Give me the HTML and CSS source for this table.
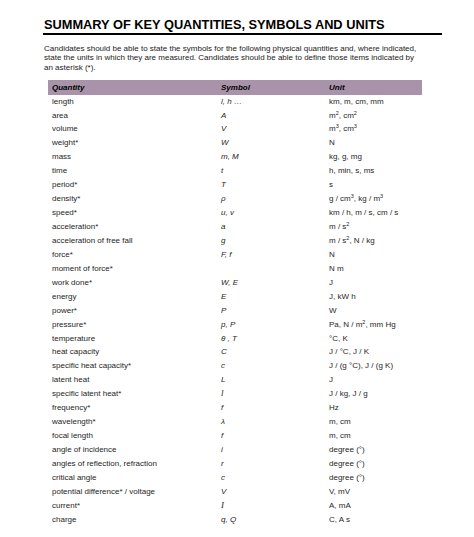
FILE: index.html
```html
<!DOCTYPE html>
<html lang="en">
<head>
<meta charset="utf-8">
<title>Summary of key quantities, symbols and units</title>
<link rel="stylesheet" href="styles.css">
</head>
<body>
<main class="page">
  <h1 class="title">SUMMARY OF KEY QUANTITIES, SYMBOLS AND UNITS</h1>
  <p class="intro">Candidates should be able to state the symbols for the following physical quantities and, where indicated, state the units in which they are measured. Candidates should be able to define those items indicated by an asterisk (*).</p>
  <table class="units">
    <colgroup><col class="c-q"><col class="c-s"><col class="c-u"></colgroup>
    <thead>
      <tr><th>Quantity</th><th>Symbol</th><th>Unit</th></tr>
    </thead>
    <tbody>
      <tr><td>length</td><td class="sym">l, h …</td><td>km, m, cm, mm</td></tr>
      <tr><td>area</td><td class="sym">A</td><td>m<sup>2</sup>, cm<sup>2</sup></td></tr>
      <tr><td>volume</td><td class="sym">V</td><td>m<sup>3</sup>, cm<sup>3</sup></td></tr>
      <tr><td>weight*</td><td class="sym">W</td><td>N</td></tr>
      <tr><td>mass</td><td class="sym">m, M</td><td>kg, g, mg</td></tr>
      <tr><td>time</td><td class="sym">t</td><td>h, min, s, ms</td></tr>
      <tr><td>period*</td><td class="sym">T</td><td>s</td></tr>
      <tr><td>density*</td><td class="sym">ρ</td><td>g / cm<sup>3</sup>, kg / m<sup>3</sup></td></tr>
      <tr><td>speed*</td><td class="sym">u, v</td><td>km / h, m / s, cm / s</td></tr>
      <tr><td>acceleration*</td><td class="sym">a</td><td>m / s<sup>2</sup></td></tr>
      <tr><td>acceleration of free fall</td><td class="sym">g</td><td>m / s<sup>2</sup>, N / kg</td></tr>
      <tr><td>force*</td><td class="sym">F, f</td><td>N</td></tr>
      <tr><td>moment of force*</td><td class="sym"></td><td>N m</td></tr>
      <tr><td>work done*</td><td class="sym">W, E</td><td>J</td></tr>
      <tr><td>energy</td><td class="sym">E</td><td>J, kW h</td></tr>
      <tr><td>power*</td><td class="sym">P</td><td>W</td></tr>
      <tr><td>pressure*</td><td class="sym">p, P</td><td>Pa, N / m<sup>2</sup>, mm Hg</td></tr>
      <tr><td>temperature</td><td class="sym">θ , T</td><td>°C, K</td></tr>
      <tr><td>heat capacity</td><td class="sym">C</td><td>J / °C, J / K</td></tr>
      <tr><td>specific heat capacity*</td><td class="sym">c</td><td>J / (g °C), J / (g K)</td></tr>
      <tr><td>latent heat</td><td class="sym">L</td><td>J</td></tr>
      <tr><td>specific latent heat*</td><td class="sym serif">l</td><td>J / kg, J / g</td></tr>
      <tr><td>frequency*</td><td class="sym">f</td><td>Hz</td></tr>
      <tr><td>wavelength*</td><td class="sym">λ</td><td>m, cm</td></tr>
      <tr><td>focal length</td><td class="sym">f</td><td>m, cm</td></tr>
      <tr><td>angle of incidence</td><td class="sym">i</td><td>degree (°)</td></tr>
      <tr><td>angles of reflection, refraction</td><td class="sym">r</td><td>degree (°)</td></tr>
      <tr><td>critical angle</td><td class="sym">c</td><td>degree (°)</td></tr>
      <tr><td>potential difference* / voltage</td><td class="sym">V</td><td>V, mV</td></tr>
      <tr><td>current*</td><td class="sym serif">I</td><td>A, mA</td></tr>
      <tr><td>charge</td><td class="sym">q, Q</td><td>C, A s</td></tr>
    </tbody>
  </table>
</main>
</body>
</html>
```

FILE: styles.css
```css
html, body {
  margin: 0;
  padding: 0;
  background: #ffffff;
}

body {
  font-family: "Liberation Sans", Arial, sans-serif;
  color: #1e1e1e;
}

.page {
  width: 399px;
  padding: 17px 0 0 43px;
}

.title {
  margin: 0;
  padding: 0 0 0 1px;
  font-size: 12.8px;
  line-height: 15.5px;
  font-weight: bold;
  color: #000;
  border-bottom: 2px solid #000;
}

.intro {
  width: 378px;
  margin: 9px 0 0 1px;
  font-size: 8px;
  line-height: 9.7px;
  color: #222;
}

.units {
  margin: 7px 0 0 5px;
  width: 374px;
  border-collapse: collapse;
  table-layout: fixed;
  font-size: 8px;
}

.c-q { width: 169px; }
.c-s { width: 108px; }
.c-u { width: 97px; }

.units th {
  background: #a993aa;
  height: 15px;
  padding: 0 0 0 4px;
  text-align: left;
  font-weight: bold;
  font-style: italic;
  color: #000;
  line-height: 15px;
}

.units td {
  height: 13.94px;
  padding: 0 0 0 4px;
  line-height: 13.94px;
  color: #262626;
  white-space: nowrap;
}

.sym {
  font-style: italic;
}

.serif {
  font-family: "Liberation Serif", "Times New Roman", serif;
  font-size: 9px;
}

sup {
  font-size: 5.5px;
  line-height: 0;
  vertical-align: 3px;
}
```
